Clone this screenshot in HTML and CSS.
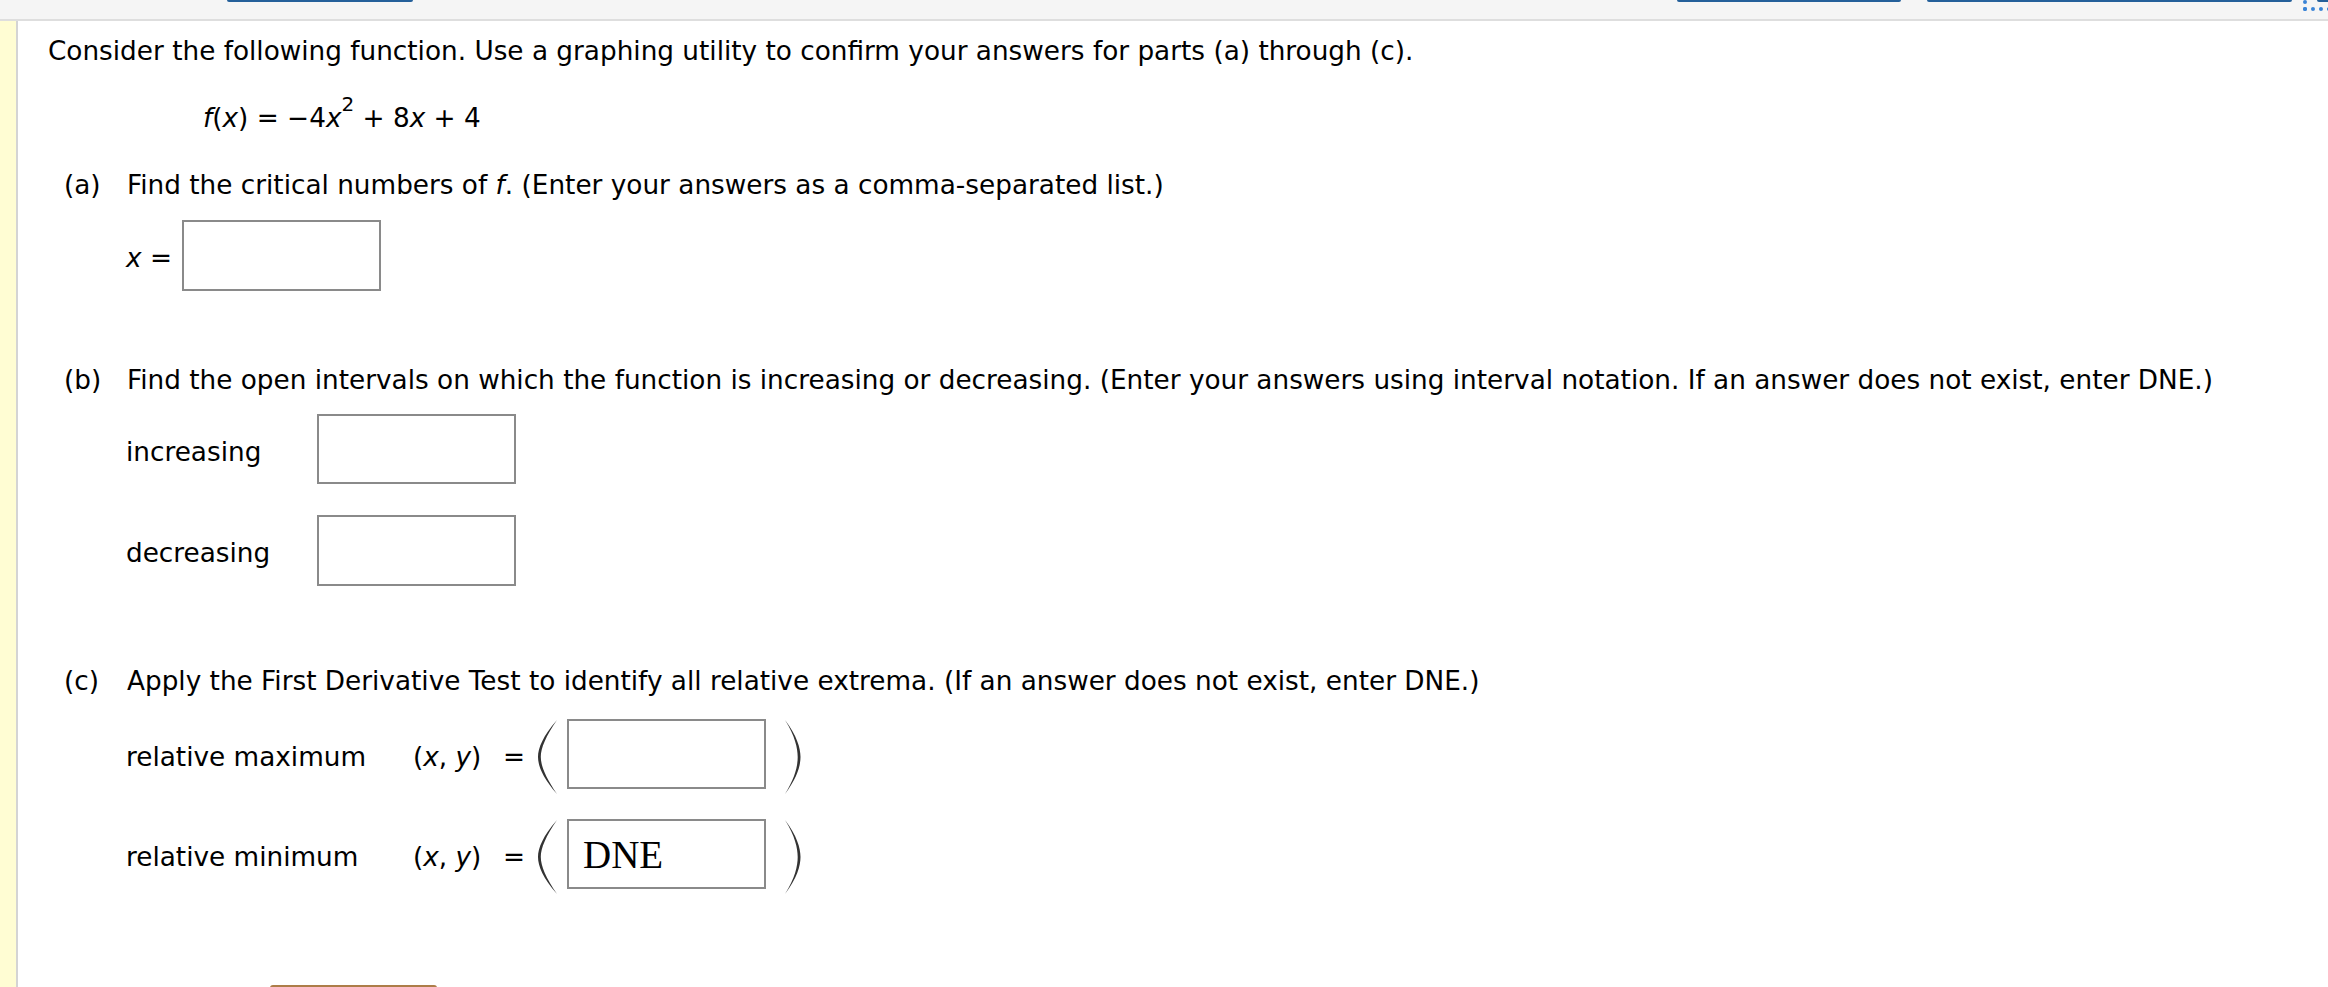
FILE: index.html
```html
<!DOCTYPE html>
<html lang="en">
<head>
<meta charset="utf-8">
<title>Critical numbers</title>
<link rel="stylesheet" href="styles.css">
</head>
<body>
<div class="topbar">
  <span class="tabedge t1"></span>
  <span class="tabedge t2"></span>
  <span class="tabedge t3"></span>
  <span class="focus"><span class="tabedge t4"></span></span>
</div>
<div class="main">
  <div class="strip"></div>
  <div class="content">
    <p class="intro">Consider the following function. Use a graphing utility to confirm your answers for parts (a) through (c).</p>
    <p class="formula"><i>f</i>(<i>x</i>) = &minus;4<i>x</i><span class="pow">2</span> + 8<i>x</i> + 4</p>

    <div class="part part-a">
      <div class="part-head"><span class="part-label">(a)</span><span class="part-text">Find the critical numbers of <i>f</i>. (Enter your answers as a comma-separated list.)</span></div>
      <div class="row row-first row-tall">
        <span class="lab lab-x"><i>x</i> =</span>
        <input class="ans" type="text" aria-label="x">
      </div>
    </div>

    <div class="part part-b">
      <div class="part-head"><span class="part-label">(b)</span><span class="part-text">Find the open intervals on which the function is increasing or decreasing. (Enter your answers using interval notation. If an answer does not exist, enter DNE.)</span></div>
      <div class="row row-first">
        <span class="lab lab-int">increasing</span>
        <input class="ans" type="text" aria-label="increasing">
      </div>
      <div class="row row-next row-tall">
        <span class="lab lab-int">decreasing</span>
        <input class="ans" type="text" aria-label="decreasing">
      </div>
    </div>

    <div class="part part-c">
      <div class="part-head"><span class="part-label">(c)</span><span class="part-text">Apply the First Derivative Test to identify all relative extrema. (If an answer does not exist, enter DNE.)</span></div>
      <div class="row row-first row-c">
        <span class="lab lab-ext">relative maximum</span>
        <span class="lab lab-xy">(<i>x</i>, <i>y</i>)</span>
        <span class="lab lab-eq">=</span>
        <svg class="paren paren-l" width="31" height="76" viewBox="0 0 31 76" aria-hidden="true"><path d="M21,1 C7,17 2,29 2,38 C2,47 7,59 21,75 C10,59 4.8,47 4.8,38 C4.8,29 10,17 21,1 Z"/></svg>
        <input class="ans" type="text" aria-label="relative maximum">
        <svg class="paren paren-r" width="40" height="76" viewBox="0 0 40 76" aria-hidden="true"><path d="M19,1 C31,17 34.5,29 34.5,38 C34.5,47 31,59 19,75 C29,59 31.7,47 31.7,38 C31.7,29 29,17 19,1 Z"/></svg>
      </div>
      <div class="row row-next row-c">
        <span class="lab lab-ext">relative minimum</span>
        <span class="lab lab-xy">(<i>x</i>, <i>y</i>)</span>
        <span class="lab lab-eq">=</span>
        <svg class="paren paren-l" width="31" height="76" viewBox="0 0 31 76" aria-hidden="true"><path d="M21,1 C7,17 2,29 2,38 C2,47 7,59 21,75 C10,59 4.8,47 4.8,38 C4.8,29 10,17 21,1 Z"/></svg>
        <input class="ans" type="text" value="DNE" aria-label="relative minimum">
        <svg class="paren paren-r" width="40" height="76" viewBox="0 0 40 76" aria-hidden="true"><path d="M19,1 C31,17 34.5,29 34.5,38 C34.5,47 31,59 19,75 C29,59 31.7,47 31.7,38 C31.7,29 29,17 19,1 Z"/></svg>
      </div>
    </div>

    <button class="submit" type="button" aria-label="Submit Answer"></button>
  </div>
</div>
</body>
</html>
```

FILE: styles.css
```css
html, body {
  margin: 0;
  padding: 0;
}

body {
  font-family: "DejaVu Sans", Verdana, sans-serif;
  font-size: 26.3px;
  color: #000;
  background: #fff;
  overflow: hidden;
}

/* top toolbar remnant */
.topbar {
  display: flex;
  align-items: flex-start;
  height: 19px;
  background: #f5f5f5;
  border-bottom: 2px solid #dedede;
  overflow: hidden;
}

.tabedge {
  display: block;
  flex: none;
  height: 2px;
  background: #25609a;
  border-radius: 0 0 2px 2px;
}

.t1 { margin-left: 227px; width: 186px; }
.t2 { margin-left: 1264px; width: 224px; }
.t3 { margin-left: 26px; width: 365px; }

.focus {
  display: flex;
  flex: none;
  margin-left: 11px;
  width: 60px;
  height: 11px;
  box-sizing: border-box;
  border-left: 4px dotted #3a84d6;
  border-bottom: 4px dotted #3a84d6;
}

.t4 { margin-left: 10px; width: 40px; }

/* main area */
.main {
  display: flex;
  min-height: 966px;
}

.strip {
  flex: none;
  width: 16px;
  background: #fffdd3;
  border-right: 2px solid #d4d4d4;
}

.content {
  flex: 1;
  min-width: 0;
  padding: 14px 0 0 30px;
}

p {
  margin: 0;
  line-height: 32px;
  white-space: nowrap;
}

.formula {
  margin: 35px 0 0 155px;
}

.pow {
  position: relative;
  top: -16px;
  font-size: 20px;
}

.part-head {
  display: flex;
  margin-left: 16px;
  line-height: 32px;
  white-space: nowrap;
}

.part-label {
  flex: none;
  width: 63px;
}

.part-text {
  flex: none;
}

.part-a { margin-top: 33px; }
.part-b { margin-top: 73px; }
.part-c { margin-top: 79px; }

.row {
  display: flex;
  align-items: center;
  margin-left: 78px;
  height: 70px;
}

.row-tall { height: 71px; }

.part-a .row-first { margin-top: 19px; }
.part-b .row-first { margin-top: 18px; }
.part-c .row-first { margin-top: 22px; }
.part-b .row-next { margin-top: 31px; }
.part-c .row-next { margin-top: 30px; }

.lab {
  flex: none;
  padding-top: 5px;
  line-height: 32px;
  white-space: nowrap;
}

.lab-x { width: 56px; }
.lab-int { width: 191px; }
.lab-ext { width: 287px; }
.lab-xy { width: 90px; }
.lab-eq { width: 33px; }

.ans {
  flex: none;
  width: 199px;
  height: 100%;
  box-sizing: border-box;
  margin: 0;
  padding: 0 0 0 14px;
  border: 2px solid #8a8a8a;
  border-radius: 0;
  background: #fff;
  color: #000;
  font-family: "Liberation Serif", "Times New Roman", serif;
  font-size: 39px;
  outline: none;
}

.paren {
  flex: none;
  align-self: flex-start;
  display: block;
}

.paren path {
  fill: #333;
}

.submit {
  display: block;
  margin: 96px 0 0 222px;
  width: 167px;
  height: 44px;
  padding: 0;
  border: 3px solid #ad7d48;
  border-radius: 3px;
  background: #f3dcb4;
}
```
